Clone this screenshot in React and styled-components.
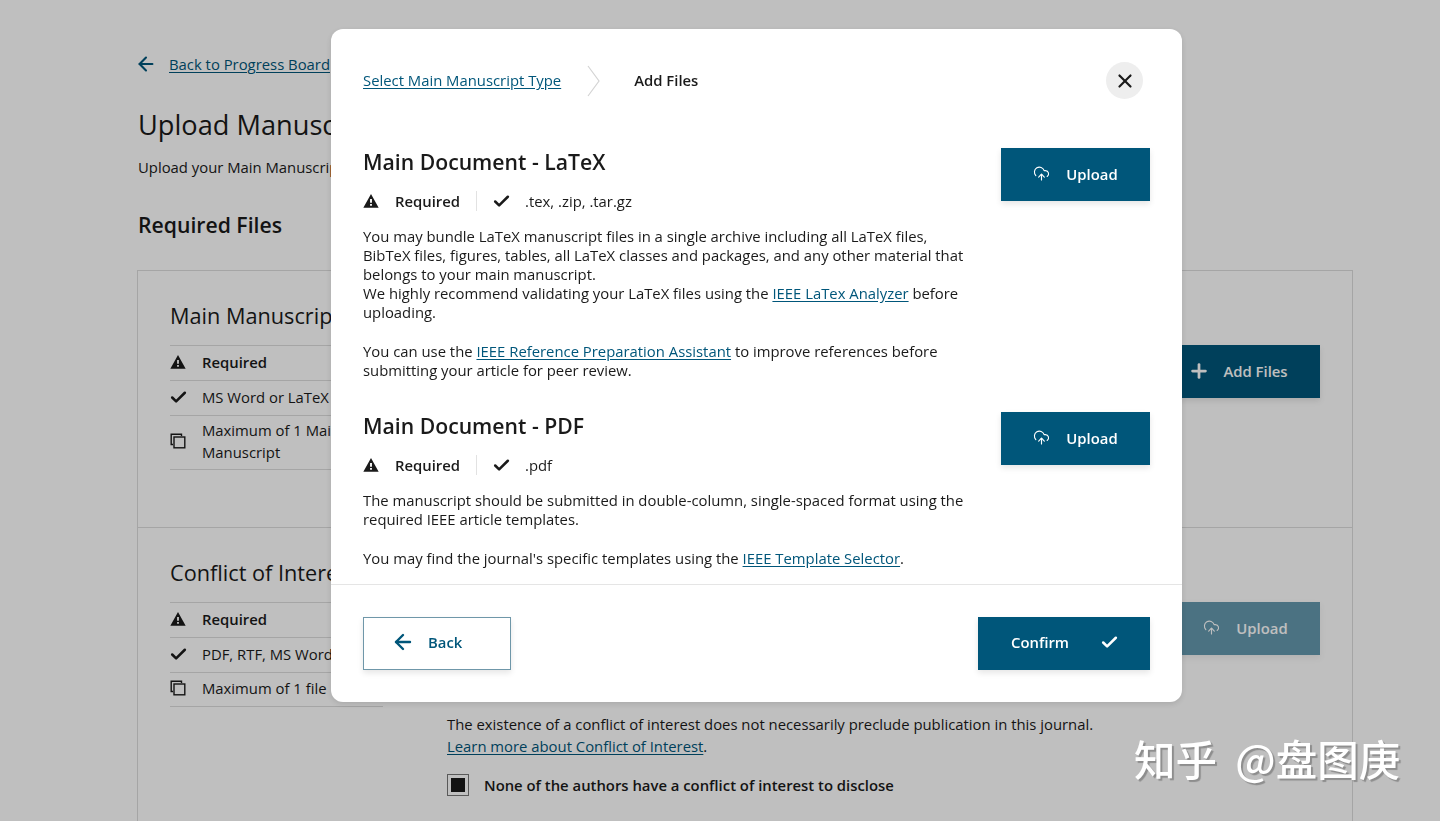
import React from "react";
import styled, { createGlobalStyle } from "styled-components";
import { ArrowLeft, Check, CloudUpload, Plus, X } from "lucide-react";

const GlobalStyle = createGlobalStyle`
  html, body {
    margin: 0;
    padding: 0;
    background: #fff;
    color: #1a1a1a;
    font-family: "Open Sans", "Noto Sans", sans-serif;
    font-size: 14.85px;
  }
  * { box-sizing: border-box; }
`;

const PRIMARY = "#00567a";

const Page = styled.div`
  height: 821px;
  overflow: hidden;
  padding: 53px 87px 0 138px;
`;
const BackLink = styled.div`
  display: flex;
  align-items: center;
  gap: 16px;
  height: 22px;
  color: ${PRIMARY};
  line-height: 22px;
`;
const Link = styled.a`
  color: ${PRIMARY};
  text-decoration: underline;
  text-underline-offset: 2px;
  cursor: pointer;
`;
const PageTitle = styled.h1`
  margin: 31px 0 0;
  font-size: 27.2px;
  font-weight: 400;
  line-height: 38px;
`;
const Lead = styled.p`
  margin: 12px 0 0;
  line-height: 22px;
  white-space: nowrap;
`;
const GroupTitle = styled.h2`
  margin: 32px 0 30px;
  font-size: 21.2px;
  font-weight: 600;
  line-height: 30px;
`;
const Card = styled.div`
  margin-left: -1px;
  border: 1px solid #dcdcdc;
  border-bottom: none;
`;
const Section = styled.section`
  display: grid;
  grid-template-columns: 213px 1fr;
  column-gap: 64px;
  height: ${(p) => p.$height};
  padding: 30px 32px 0;
  & + & { border-top: 1px solid #dcdcdc; }
`;
const SectionTitle = styled.h3`
  margin: 0 0 14px;
  font-size: 21.7px;
  font-weight: 400;
  line-height: 30px;
  white-space: nowrap;
`;
const InfoList = styled.ul`
  margin: 0;
  padding: 0;
  list-style: none;
`;
const InfoItem = styled.li`
  display: grid;
  grid-template-columns: 32px 1fr;
  align-items: center;
  min-height: 35px;
  padding: 4px 0 6px;
  border-top: 1px solid #dcdcdc;
  font-weight: ${(p) => (p.$strong ? 600 : 400)};
  line-height: 22px;
  &:last-child {
    padding: 3px 0 6px;
    border-bottom: 1px solid #dcdcdc;
  }
`;
const ActionColumn = styled.div`
  padding-top: 44px;
`;
const ActionRow = styled.div`
  display: flex;
  justify-content: flex-end;
`;
const Note = styled.p`
  margin: 58px 0 0;
  line-height: 22px;
`;
const CheckRow = styled.label`
  display: flex;
  align-items: center;
  gap: 15px;
  margin-top: 17px;
  font-weight: 600;
`;
const CheckBox = styled.span`
  display: flex;
  align-items: center;
  justify-content: center;
  width: 22px;
  height: 22px;
  border: 1px solid #777;
  &::after {
    content: "";
    width: 14px;
    height: 14px;
    background: #1a1a1a;
  }
`;

const Button = styled.button`
  display: flex;
  align-items: center;
  justify-content: center;
  gap: 16px;
  width: ${(p) => p.$width || "149px"};
  height: 53px;
  padding: 0 0 2px;
  border: 1px solid ${PRIMARY};
  border-radius: 0;
  background: ${PRIMARY};
  box-shadow: 0 3px 6px rgba(0, 0, 0, 0.1);
  color: #fff;
  font-family: inherit;
  font-size: 14.85px;
  font-weight: 600;
  opacity: ${(p) => (p.$disabled ? 0.6 : 1)};
`;
const ConfirmButton = styled(Button)`
  justify-content: space-between;
  padding: 0 32px 3px;
`;
const GhostButton = styled(Button)`
  justify-content: flex-start;
  gap: 17px;
  padding: 0 0 3px 31px;
  border-color: #6f97a9;
  background: #fff;
  color: ${PRIMARY};
`;

const Overlay = styled.div`
  position: fixed;
  inset: 0;
  padding: 29px 0 0 331px;
  background: rgba(0, 0, 0, 0.25);
`;
const Modal = styled.div`
  display: flex;
  flex-direction: column;
  width: 851px;
  height: 673px;
  overflow: hidden;
  border-radius: 12px;
  background: #fff;
  box-shadow: 0 2px 6px rgba(0, 0, 0, 0.12);
`;
const ModalHeader = styled.header`
  display: flex;
  align-items: center;
  flex: none;
  padding: 33px 39px 0 32px;
`;
const CrumbLink = styled(Link)`
  padding-bottom: 2px;
`;
const Crumb = styled.span`
  padding-bottom: 2px;
  font-weight: 600;
`;
const CrumbDivider = styled.svg`
  margin: 0 34px 0 26px;
  flex: none;
`;
const CloseButton = styled.button`
  display: flex;
  align-items: center;
  justify-content: center;
  width: 37px;
  height: 37px;
  margin-left: auto;
  padding: 0;
  border: none;
  border-radius: 50%;
  background: #eeeeee;
  color: #1a1a1a;
`;
const ModalBody = styled.div`
  flex: 1;
  min-height: 0;
  overflow: hidden;
  padding: 48px 32px 0;
`;
const DocBlock = styled.article`
  display: grid;
  grid-template-columns: 615px 149px;
  justify-content: space-between;
  & + & { margin-top: 31px; }
`;
const DocAction = styled.div`
  padding-top: 1px;
`;
const DocTitle = styled.h2`
  margin: 0 0 13px;
  font-size: 21.2px;
  font-weight: 600;
  line-height: 30px;
`;
const MetaRow = styled.div`
  display: flex;
  align-items: center;
  height: 22px;
  margin-bottom: 15px;
`;
const MetaRequired = styled.span`
  margin-left: 16px;
  font-weight: 600;
`;
const MetaDivider = styled.span`
  width: 1px;
  height: 20px;
  margin: 0 16px;
  background: #e2e2e2;
`;
const MetaTypes = styled.span`
  margin-left: 16px;
`;
const Copy = styled.p`
  margin: 0 0 20px;
  line-height: 19px;
  &:last-child { margin-bottom: 0; }
`;
const ModalFooter = styled.footer`
  display: flex;
  justify-content: space-between;
  flex: none;
  padding: 32px;
  border-top: 1px solid #e5e5e5;
`;
const Watermark = styled.div`
  position: fixed;
  left: 1134px;
  top: 730px;
  color: #fff;
  font-family: "Noto Sans CJK SC", "Noto Sans", sans-serif;
  font-size: 41.5px;
  font-weight: 500;
  line-height: 56px;
  word-spacing: 9px;
  white-space: nowrap;
  text-shadow: 2px 2px 1px #8d8d8d;
`;
const BoldCheck = styled(Check)`
  margin: -1.5px;
`;
const BackArrow = styled(ArrowLeft)`
  margin: -3.5px;
`;
const FooterArrow = styled(ArrowLeft)`
  margin: -4px;
`;
const PlusIcon = styled(Plus)`
  margin: -3px;
`;

const WarningIcon = () => (
  <svg width="16" height="16" viewBox="0 0 24 24">
    <path d="M12 1.5 0.5 22h23L12 1.5zm1.4 17.6h-2.8v-2.7h2.8v2.7zm0-4.6h-2.8V9h2.8v5.5z" fill="#1a1a1a" fillRule="evenodd" />
  </svg>
);

const CopiesIcon = () => (
  <svg width="16" height="16" viewBox="0 0 16 16" fill="none" stroke="#1a1a1a" strokeWidth="1.4">
    <path d="M3 11.5H1.2V1.2h10.3V3" />
    <rect x="4" y="4" width="10.8" height="10.8" />
  </svg>
);

const CheckIcon = ({ color = "#1a1a1a" }) => (
  <BoldCheck size={19} color={color} strokeWidth={3.2} />
);

const Info = ({ icon, strong, children }) => (
  <InfoItem $strong={strong}>
    {icon}
    <span>{children}</span>
  </InfoItem>
);

const DocMeta = ({ types }) => (
  <MetaRow>
    <WarningIcon />
    <MetaRequired>Required</MetaRequired>
    <MetaDivider />
    <CheckIcon />
    <MetaTypes>{types}</MetaTypes>
  </MetaRow>
);

const UploadButton = ({ disabled }) => (
  <Button $disabled={disabled}>
    <CloudUpload size={17} strokeWidth={1.6} />
    Upload
  </Button>
);

export default function App() {
  return (
    <>
      <GlobalStyle />
      <Page>
        <BackLink>
          <BackArrow size={22} strokeWidth={2.3} />
          <Link>Back to Progress Board</Link>
        </BackLink>
        <PageTitle>Upload Manuscript</PageTitle>
        <Lead>Upload your Main Manuscript and any supporting files for your submission.</Lead>
        <GroupTitle>Required Files</GroupTitle>
        <Card>
          <Section $height="256px">
            <div>
              <SectionTitle>Main Manuscript</SectionTitle>
              <InfoList>
                <Info icon={<WarningIcon />} strong>Required</Info>
                <Info icon={<CheckIcon />}>MS Word or LaTeX</Info>
                <Info icon={<CopiesIcon />}>Maximum of 1 Main Manuscript</Info>
              </InfoList>
            </div>
            <ActionColumn>
              <ActionRow>
                <Button $width="161px">
                  <PlusIcon size={22} strokeWidth={3} />
                  Add Files
                </Button>
              </ActionRow>
            </ActionColumn>
          </Section>
          <Section $height="400px">
            <div>
              <SectionTitle>Conflict of Interest</SectionTitle>
              <InfoList>
                <Info icon={<WarningIcon />} strong>Required</Info>
                <Info icon={<CheckIcon />}>PDF, RTF, MS Word</Info>
                <Info icon={<CopiesIcon />}>Maximum of 1 file</Info>
              </InfoList>
            </div>
            <ActionColumn>
              <ActionRow>
                <UploadButton disabled />
              </ActionRow>
              <Note>
                The existence of a conflict of interest does not necessarily preclude publication in this journal.
                <br />
                <Link>Learn more about Conflict of Interest</Link>.
              </Note>
              <CheckRow>
                <CheckBox />
                None of the authors have a conflict of interest to disclose
              </CheckRow>
            </ActionColumn>
          </Section>
        </Card>
      </Page>

      <Overlay>
        <Modal>
          <ModalHeader>
            <CrumbLink>Select Main Manuscript Type</CrumbLink>
            <CrumbDivider width="13" height="32" viewBox="0 0 13 32" fill="none" stroke="#d4d4d4" strokeWidth="1.2">
              <path d="M1 1l11 15L1 31" />
            </CrumbDivider>
            <Crumb>Add Files</Crumb>
            <CloseButton>
              <X size={22} strokeWidth={2.4} />
            </CloseButton>
          </ModalHeader>
          <ModalBody>
            <DocBlock>
              <div>
                <DocTitle>Main Document - LaTeX</DocTitle>
                <DocMeta types=".tex, .zip, .tar.gz" />
                <Copy>
                  You may bundle LaTeX manuscript files in a single archive including all LaTeX files,
                  BibTeX files, figures, tables, all LaTeX classes and packages, and any other material that
                  belongs to your main manuscript.
                  <br />
                  We highly recommend validating your LaTeX files using the <Link>IEEE LaTex Analyzer</Link> before
                  uploading.
                </Copy>
                <Copy>
                  You can use the <Link>IEEE Reference Preparation Assistant</Link> to improve references before
                  submitting your article for peer review.
                </Copy>
              </div>
              <DocAction>
                <UploadButton />
              </DocAction>
            </DocBlock>
            <DocBlock>
              <div>
                <DocTitle>Main Document - PDF</DocTitle>
                <DocMeta types=".pdf" />
                <Copy>
                  The manuscript should be submitted in double-column, single-spaced format using the
                  required IEEE article templates.
                </Copy>
                <Copy>
                  You may find the journal's specific templates using the <Link>IEEE Template Selector</Link>.
                </Copy>
              </div>
              <DocAction>
                <UploadButton />
              </DocAction>
            </DocBlock>
          </ModalBody>
          <ModalFooter>
            <GhostButton $width="148px">
              <FooterArrow size={24} strokeWidth={2.4} />
              Back
            </GhostButton>
            <ConfirmButton $width="172px">
              Confirm
              <CheckIcon color="#fff" />
            </ConfirmButton>
          </ModalFooter>
        </Modal>
      </Overlay>
      <Watermark>知乎 @盘图庚</Watermark>
    </>
  );
}
